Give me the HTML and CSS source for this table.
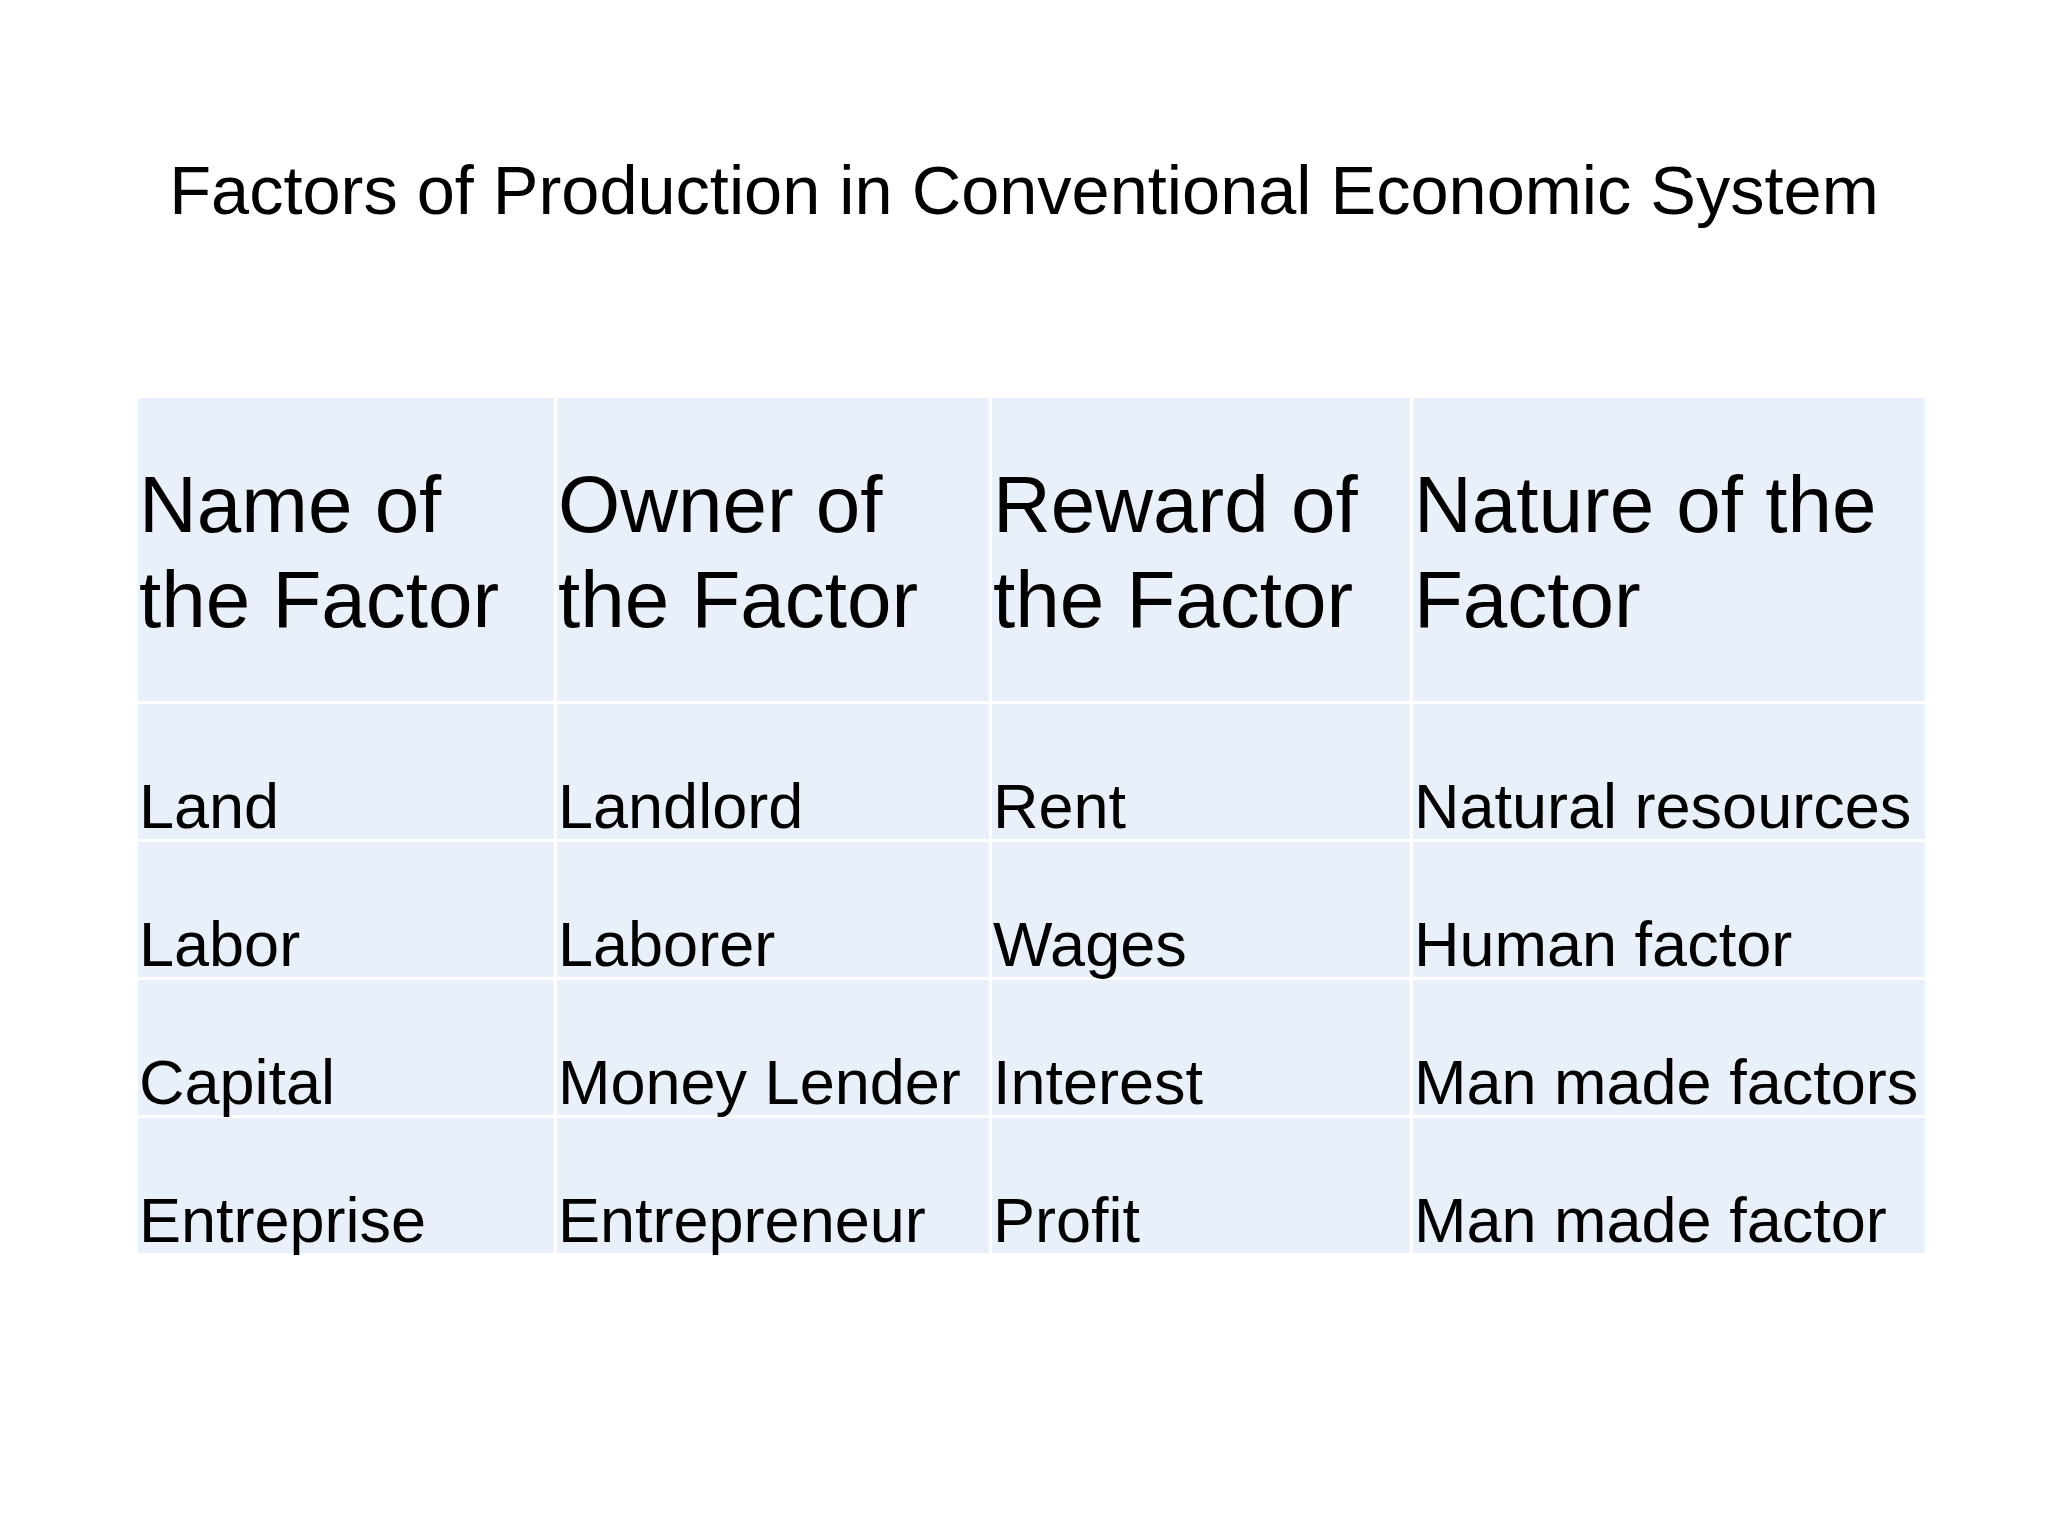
FILE: index.html
```html
<!DOCTYPE html>
<html lang="en">
<head>
<meta charset="utf-8">
<title>Factors of Production in Conventional Economic System</title>
<link rel="stylesheet" href="styles.css">
</head>
<body>
<main class="slide">
  <h1 class="title">Factors of Production in Conventional Economic System</h1>
  <div class="table">
    <div class="cell head">Name of the Factor</div>
    <div class="cell head">Owner of the Factor</div>
    <div class="cell head">Reward of the Factor</div>
    <div class="cell head">Nature of the Factor</div>

    <div class="cell">Land</div>
    <div class="cell">Landlord</div>
    <div class="cell">Rent</div>
    <div class="cell">Natural resources</div>

    <div class="cell">Labor</div>
    <div class="cell">Laborer</div>
    <div class="cell">Wages</div>
    <div class="cell">Human factor</div>

    <div class="cell">Capital</div>
    <div class="cell">Money Lender</div>
    <div class="cell">Interest</div>
    <div class="cell">Man made factors</div>

    <div class="cell">Entreprise</div>
    <div class="cell">Entrepreneur</div>
    <div class="cell">Profit</div>
    <div class="cell">Man made factor</div>
  </div>
</main>
</body>
</html>
```

FILE: styles.css
```css
html, body {
  margin: 0;
  padding: 0;
  background: #ffffff;
}

body {
  font-family: "Liberation Sans", Arial, sans-serif;
  color: #000000;
}

.slide {
  width: 2048px;
  height: 1536px;
  box-sizing: border-box;
  padding-top: 152px;
  display: flex;
  flex-direction: column;
  align-items: center;
}

.title {
  margin: 0;
  font-size: 68.5px;
  font-weight: normal;
  line-height: 78px;
  text-align: center;
}

.table {
  margin-top: 168px;
  margin-left: 15px;
  display: grid;
  grid-template-columns: 416px 432px 418px 512px;
  grid-template-rows: 303px repeat(4, 135px);
  gap: 3px;
  background: #ffffff;
}

.cell {
  background: #eaf0fa;
  font-size: 63px;
  line-height: 66px;
  padding: 0 0 0 1px;
  display: flex;
  align-items: flex-end;
  white-space: nowrap;
  box-sizing: border-box;
}

.head {
  font-size: 80px;
  line-height: 95px;
  white-space: normal;
  align-items: flex-start;
  padding: 59px 0 0 1px;
}
```
